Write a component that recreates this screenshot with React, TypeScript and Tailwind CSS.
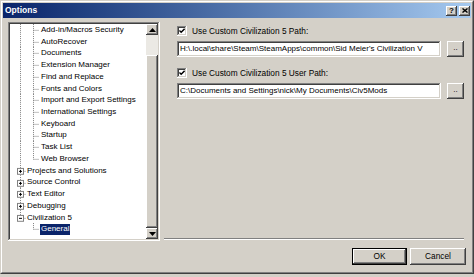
import React from 'react';

type Row = {
  label: string;
  level: 0 | 1;
  box?: '+' | '-';
  rootLine: 'full' | 'half' | 'none';
  childLine?: 'mid' | 'last';
  selected?: boolean;
};

const environmentChildren = [
  'Add-in/Macros Security',
  'AutoRecover',
  'Documents',
  'Extension Manager',
  'Find and Replace',
  'Fonts and Colors',
  'Import and Export Settings',
  'International Settings',
  'Keyboard',
  'Startup',
  'Task List',
  'Web Browser',
];

const rows: Row[] = [
  ...environmentChildren.map((label, i) => ({
    label,
    level: 1 as const,
    rootLine: 'full' as const,
    childLine: i === environmentChildren.length - 1 ? ('last' as const) : ('mid' as const),
  })),
  { label: 'Projects and Solutions', level: 0, box: '+', rootLine: 'full' },
  { label: 'Source Control', level: 0, box: '+', rootLine: 'full' },
  { label: 'Text Editor', level: 0, box: '+', rootLine: 'full' },
  { label: 'Debugging', level: 0, box: '+', rootLine: 'full' },
  { label: 'Civilization 5', level: 0, box: '-', rootLine: 'half' },
  { label: 'General', level: 1, rootLine: 'none', childLine: 'last', selected: true },
];

const raised =
  'shadow-[inset_-1px_-1px_#404040,inset_1px_1px_#ffffff,inset_-2px_-2px_#808080,inset_2px_2px_#d4d0c8]';
const sunken =
  'shadow-[inset_-1px_-1px_#ffffff,inset_1px_1px_#808080,inset_-2px_-2px_#d4d0c8,inset_2px_2px_#404040]';

function Connector({ row }: { row: Row }) {
  const w = row.level === 0 ? 16 : 30;
  const dot = { stroke: '#808080', strokeWidth: 1, strokeDasharray: '1 1', shapeRendering: 'crispEdges' as const };
  return (
    <svg width={w} height="100%" viewBox={`0 0 ${w} 12`} preserveAspectRatio="none" className="shrink-0">
      {row.rootLine === 'full' && <line x1="10.5" y1="0" x2="10.5" y2="12" {...dot} />}
      {row.rootLine === 'half' && <line x1="10.5" y1="0" x2="10.5" y2="6.5" {...dot} />}
      {row.level === 0 && <line x1="13.5" y1="6.5" x2="16" y2="6.5" {...dot} />}
      {row.box && (
        <g shapeRendering="crispEdges">
          <rect x="7.5" y="3.5" width="6" height="6" fill="#fff" stroke="#808080" />
          <line x1="9" y1="6.5" x2="12" y2="6.5" stroke="#000" />
          {row.box === '+' && <line x1="10.5" y1="5" x2="10.5" y2="8" stroke="#000" />}
        </g>
      )}
      {row.childLine && (
        <>
          <line x1="23.5" y1="0" x2="23.5" y2={row.childLine === 'mid' ? 12 : 6.5} {...dot} />
          <line x1="23.5" y1="6.5" x2="29" y2="6.5" {...dot} />
        </>
      )}
    </svg>
  );
}

function Arrow({ up }: { up?: boolean }) {
  return (
    <svg width="7" height="4" viewBox="0 0 7 4">
      <path d={up ? 'M3.5 0 L7 4 L0 4 Z' : 'M0 0 L7 0 L3.5 4 Z'} fill="#000" />
    </svg>
  );
}

function Check() {
  return (
    <div className={`w-[10px] h-[10px] bg-white ${sunken} flex items-center justify-center`}>
      <svg width="6" height="6" viewBox="0 0 7 7">
        <path d="M0.5 3 L2.5 5 L6.5 1" fill="none" stroke="#000" strokeWidth="1.6" />
      </svg>
    </div>
  );
}

function PathField({ checkLabel, value }: { checkLabel: string; value: string }) {
  return (
    <>
      <div className="flex items-center gap-[5px] h-[10px]">
        <Check />
        <span className="text-[8.3px] leading-none text-black">{checkLabel}</span>
      </div>
      <div className="flex items-center gap-[6px] mt-[5px] h-[16px]">
        <div className={`flex-1 h-full bg-white ${sunken} flex items-center pl-[3px] overflow-hidden`}>
          <span className="text-[8px] leading-none text-black whitespace-nowrap">{value}</span>
        </div>
        <button className={`w-[17px] h-full bg-[#d4d0c8] ${raised} text-[8px] leading-none text-black pb-[2px]`}>
          ..
        </button>
      </div>
    </>
  );
}

export default function App() {
  return (
    <div
      className="w-[474px] h-[277px] bg-[#d4d0c8]"
      style={{ fontFamily: '"Liberation Sans", Arial, sans-serif' }}
    >
      <div className="w-[474px] h-[274px] border border-t-[#d4d0c8] border-l-[#d4d0c8] border-r-[#404040] border-b-[#404040]">
        <div className="w-full h-full border border-t-white border-l-white border-r-[#808080] border-b-[#808080] p-px flex flex-col">
          {/* Title bar */}
          <div className="h-[15px] shrink-0 bg-gradient-to-r from-[#0a246a] to-[#a6caf0] flex items-center pl-[2px] pr-[1px]">
            <span className="text-white font-bold text-[8.5px] leading-none">Options</span>
            <div className="ml-auto flex gap-[2px]">
              <div className={`w-[11px] h-[10px] bg-[#d4d0c8] ${raised} flex items-center justify-center text-[8px] font-bold leading-none text-black`}>
                ?
              </div>
              <div className={`w-[11px] h-[10px] bg-[#d4d0c8] ${raised} flex items-center justify-center`}>
                <svg width="6" height="5" viewBox="0 0 6 5">
                  <path d="M0.5 0.5 L5.5 4.5 M5.5 0.5 L0.5 4.5" stroke="#000" strokeWidth="1.4" />
                </svg>
              </div>
            </div>
          </div>

          {/* Body */}
          <div className="flex mt-[4px] pl-[5px] pr-[7px] h-[219px] shrink-0">
            {/* Tree */}
            <div className={`w-[152px] h-full bg-white ${sunken} p-[2px] flex`}>
              <div className="flex-1 overflow-hidden">
                {rows.map((row) => (
                  <div key={row.label} className="flex items-center h-[11.74px]">
                    <Connector row={row} />
                    <span
                      className={`text-[8px] leading-none px-px py-[1.5px] whitespace-nowrap ${
                        row.selected ? 'bg-[#0a246a] text-white' : 'text-black'
                      }`}
                    >
                      {row.label}
                    </span>
                  </div>
                ))}
              </div>
              {/* Scrollbar */}
              <div className="w-[12px] h-full flex flex-col bg-[#ebe9e4]">
                <div className={`h-[11px] bg-[#d4d0c8] ${raised} flex items-center justify-center`}>
                  <Arrow up />
                </div>
                <div className="h-[20px]" />
                <div className={`flex-1 bg-[#d4d0c8] ${raised}`} />
                <div className={`h-[11px] bg-[#d4d0c8] ${raised} flex items-center justify-center`}>
                  <Arrow />
                </div>
              </div>
            </div>

            {/* Right panel */}
            <div className="flex-1 ml-[17px] flex flex-col pt-[4px]">
              <PathField
                checkLabel="Use Custom Civilization 5 Path:"
                value="H:\.local\share\Steam\SteamApps\common\Sid Meier's Civilization V"
              />
              <div className="h-[11px]" />
              <PathField
                checkLabel="Use Custom Civilization 5 User Path:"
                value="C:\Documents and Settings\nick\My Documents\Civ5Mods"
              />
              <div className="flex-1" />
              <div className="h-[2px] -ml-[13px] border-t border-t-[#808080] border-b border-b-white mb-[1px]" />
            </div>
          </div>

          {/* Footer */}
          <div className="flex justify-end gap-[3px] pr-[5px] mt-[7px]">
            <button
              className="w-[55px] h-[17px] bg-[#d4d0c8] shadow-[inset_-1px_-1px_#000000,inset_1px_1px_#000000,inset_-2px_-2px_#404040,inset_2px_2px_#ffffff,inset_-3px_-3px_#808080] text-[8.3px] leading-none text-black"
            >
              OK
            </button>
            <button className={`w-[56px] h-[17px] bg-[#d4d0c8] ${raised} text-[8.3px] leading-none text-black`}>
              Cancel
            </button>
          </div>
        </div>
      </div>
    </div>
  );
}
